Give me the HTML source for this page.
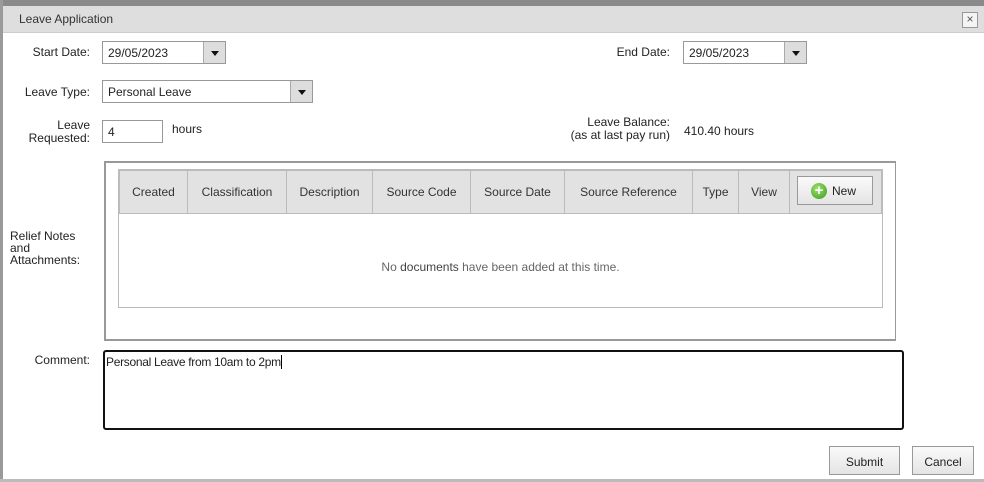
<!DOCTYPE html>
<html><head><meta charset="utf-8"><style>
*{box-sizing:border-box;margin:0;padding:0}
body{width:984px;height:482px;overflow:hidden;background:#fff;font-family:"Liberation Sans",Arial,sans-serif;font-size:12px;color:#222;position:relative}
.a{position:absolute}
.top{left:0;top:0;width:984px;height:6px;background:#8a8a8a}
.leftb{left:0;top:0;width:3px;height:482px;background:#9a9a9a}
.botb{left:0;top:479px;width:984px;height:3px;background:#bbb}
.title{left:3px;top:6px;width:981px;height:27px;background:#dedede;border-bottom:1px solid #ccc;padding:6px 0 0 16px;color:#333}
.x{left:962px;top:12px;width:16px;height:16px;border:1px solid #999;background:#f4f4f4;font-size:12px;line-height:13px;text-align:center;color:#555}
.lbl{text-align:right}
.inp{border:1px solid #999;background:#fff;padding:4px 5px;height:23px}
.dd{width:22px;height:21px;background:#ddd;border-left:1px solid #aaa;position:absolute;right:0;top:0}
.dd:after{content:"";position:absolute;left:7px;top:9px;border-left:4px solid transparent;border-right:4px solid transparent;border-top:5px solid #111}
table{border-collapse:collapse}
th{background:#e2e2e2;border:1px solid #bbb;font-weight:normal;height:43px;padding:0;color:#333}
.btn{border:1px solid #999;background:linear-gradient(#fafafa,#e4e4e4);text-align:center;color:#222}
</style></head><body>
<div class="a top"></div><div class="a leftb"></div><div class="a botb"></div>
<div class="a title">Leave Application</div>
<div class="a x">×</div>

<div class="a lbl" style="left:10px;top:45px;width:80px">Start Date:</div>
<div class="a inp" style="left:102px;top:41px;width:124px">29/05/2023<div class="dd"></div></div>
<div class="a lbl" style="left:590px;top:45px;width:80px">End Date:</div>
<div class="a inp" style="left:683px;top:41px;width:124px">29/05/2023<div class="dd"></div></div>

<div class="a lbl" style="left:5px;top:85px;width:85px">Leave Type:</div>
<div class="a inp" style="left:102px;top:80px;width:211px">Personal Leave<div class="dd"></div></div>

<div class="a lbl" style="left:10px;top:119px;width:80px;line-height:13px">Leave<br>Requested:</div>
<div class="a inp" style="left:102px;top:120px;width:61px">4</div>
<div class="a" style="left:172px;top:122px">hours</div>

<div class="a lbl" style="left:500px;top:116px;width:170px;line-height:13px">Leave Balance:<br>(as at last pay run)</div>
<div class="a" style="left:684px;top:124px">410.40 hours</div>

<div class="a" style="left:10px;top:230px;line-height:12px">Relief Notes<br>and<br>Attachments:</div>
<div class="a" style="left:104px;top:161px;width:792px;height:180px;border:2px solid #999;border-right-width:1px"></div>
<div class="a" style="left:118px;top:169px;width:765px;height:139px;border:1px solid #bbb;background:#fff">
<table style="width:763px"><tr>
<th style="width:68px">Created</th><th style="width:99px">Classification</th><th style="width:86px">Description</th><th style="width:98px">Source Code</th><th style="width:94px">Source Date</th><th style="width:128px">Source Reference</th><th style="width:46px">Type</th><th style="width:51px">View</th><th></th></tr></table>
<div class="a" style="left:0;top:90px;width:763px;text-align:center;color:#666">No <b style="font-weight:normal;color:#444">documents</b> have been added at this time.</div>
</div>
<div class="a btn" style="left:797px;top:176px;width:76px;height:29px">
<span style="position:absolute;left:13px;top:6px;width:16px;height:16px;border-radius:50%;background:radial-gradient(circle at 40% 35%,#9de070,#3a9a1a);color:#fff;font-weight:bold;font-size:15px;line-height:15px;text-align:center">+</span>
<span style="position:absolute;left:34px;top:7px">New</span></div>

<div class="a lbl" style="left:10px;top:353px;width:80px">Comment:</div>
<div class="a" style="left:103px;top:350px;width:801px;height:80px;border:2px solid #111;border-radius:3px;padding:3px 1px;font-size:12px;letter-spacing:-0.3px">Personal Leave from 10am to 2pm<span style="border-left:1px solid #000"></span></div>

<div class="a btn" style="left:829px;top:446px;width:71px;height:29px;padding-top:8px">Submit</div>
<div class="a btn" style="left:912px;top:446px;width:62px;height:29px;padding-top:8px">Cancel</div>
</body></html>
